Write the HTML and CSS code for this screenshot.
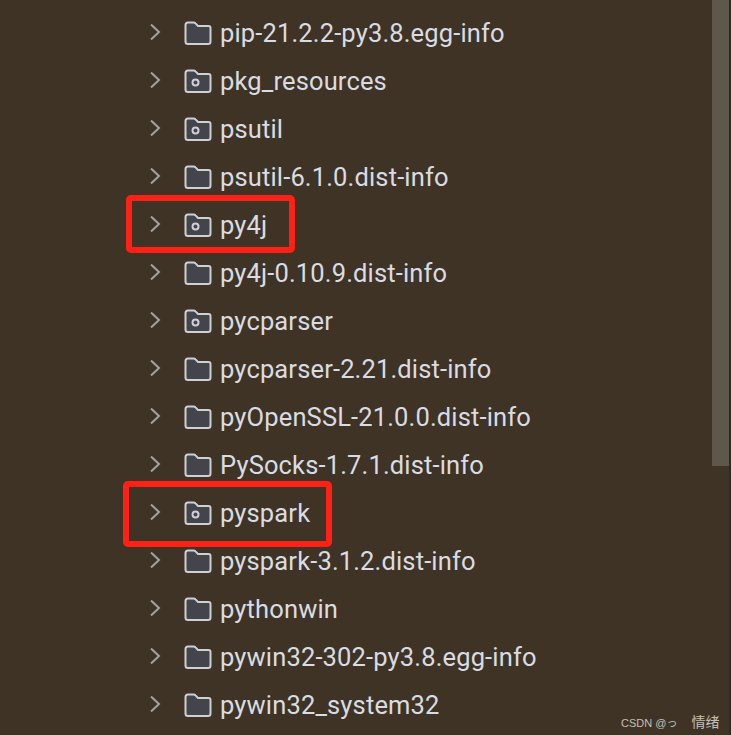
FILE: index.html
```html
<!DOCTYPE html>
<html lang="en">
<head>
  <meta charset="UTF-8" />
  <title>Project tree</title>
  <link rel="stylesheet" href="styles.css">
</head>
<body>
  <svg class="defs" width="0" height="0">
    <symbol id="chevron" viewBox="0 0 12 18">
      <path d="M2 1.5 L10 9 L2 16.5" fill="none" stroke="#a3a3a0" stroke-width="2"/>
    </symbol>
    <symbol id="folder" viewBox="0 0 28 24">
      <path d="M1.5 4 Q1.5 1.5 4 1.5 H9.5 Q10.7 1.5 11.5 2.4 L14 5 H24.5 Q26.5 5 26.5 7 V20.5 Q26.5 23 24 23 H4 Q1.5 23 1.5 20.5 Z" fill="#43454a" stroke="#ced0d6" stroke-width="2"/>
    </symbol>
    <symbol id="package" viewBox="0 0 28 24">
      <path d="M1.5 4 Q1.5 1.5 4 1.5 H9.5 Q10.7 1.5 11.5 2.4 L14 5 H24.5 Q26.5 5 26.5 7 V20.5 Q26.5 23 24 23 H4 Q1.5 23 1.5 20.5 Z" fill="#43454a" stroke="#ced0d6" stroke-width="2"/>
      <circle cx="11.5" cy="13.5" r="3" fill="none" stroke="#ced0d6" stroke-width="2"/>
    </symbol>
  </svg>

  <ul class="tree">
    <li class="row"><svg class="chevron"><use href="#chevron"/></svg><svg class="icon"><use href="#folder"/></svg><span class="name">pip-21.2.2-py3.8.egg-info</span></li>
    <li class="row"><svg class="chevron"><use href="#chevron"/></svg><svg class="icon"><use href="#package"/></svg><span class="name">pkg_resources</span></li>
    <li class="row"><svg class="chevron"><use href="#chevron"/></svg><svg class="icon"><use href="#package"/></svg><span class="name">psutil</span></li>
    <li class="row"><svg class="chevron"><use href="#chevron"/></svg><svg class="icon"><use href="#folder"/></svg><span class="name">psutil-6.1.0.dist-info</span></li>
    <li class="row"><svg class="chevron"><use href="#chevron"/></svg><svg class="icon"><use href="#package"/></svg><span class="name">py4j</span></li>
    <li class="row"><svg class="chevron"><use href="#chevron"/></svg><svg class="icon"><use href="#folder"/></svg><span class="name">py4j-0.10.9.dist-info</span></li>
    <li class="row"><svg class="chevron"><use href="#chevron"/></svg><svg class="icon"><use href="#package"/></svg><span class="name">pycparser</span></li>
    <li class="row"><svg class="chevron"><use href="#chevron"/></svg><svg class="icon"><use href="#folder"/></svg><span class="name">pycparser-2.21.dist-info</span></li>
    <li class="row"><svg class="chevron"><use href="#chevron"/></svg><svg class="icon"><use href="#folder"/></svg><span class="name">pyOpenSSL-21.0.0.dist-info</span></li>
    <li class="row"><svg class="chevron"><use href="#chevron"/></svg><svg class="icon"><use href="#folder"/></svg><span class="name">PySocks-1.7.1.dist-info</span></li>
    <li class="row"><svg class="chevron"><use href="#chevron"/></svg><svg class="icon"><use href="#package"/></svg><span class="name">pyspark</span></li>
    <li class="row"><svg class="chevron"><use href="#chevron"/></svg><svg class="icon"><use href="#folder"/></svg><span class="name">pyspark-3.1.2.dist-info</span></li>
    <li class="row"><svg class="chevron"><use href="#chevron"/></svg><svg class="icon"><use href="#folder"/></svg><span class="name">pythonwin</span></li>
    <li class="row"><svg class="chevron"><use href="#chevron"/></svg><svg class="icon"><use href="#folder"/></svg><span class="name">pywin32-302-py3.8.egg-info</span></li>
    <li class="row"><svg class="chevron"><use href="#chevron"/></svg><svg class="icon"><use href="#folder"/></svg><span class="name">pywin32_system32</span></li>
  </ul>

  <div class="scrollbar"></div>
  <div class="mark mark-py4j"></div>
  <div class="mark mark-pyspark"></div>
  <div class="watermark">CSDN @っ<span class="watermark-name">情绪</span></div>
</body>
</html>
```

FILE: styles.css
```css
* { box-sizing: border-box; }
html, body {
  height: 100%;
}
body {
  margin: 0;
  overflow: hidden;
  position: relative;
  background: #3f3326;
  font-family: Roboto, "Open Sans", sans-serif;
}
.defs { position: absolute; }

/* File tree */
.tree {
  list-style: none;
  margin: 0;
  padding: 8px 0 0 149px;
}
.row {
  display: flex;
  align-items: center;
  height: 48px;
  color: #d8dce3;
  font-size: 25.5px;
  letter-spacing: 0.15px;
}
.name {
  margin-top: 2px;
}
.chevron {
  width: 12px;
  height: 18px;
  margin-right: 23px;
}
.icon {
  width: 28px;
  height: 24px;
  margin-right: 8px;
  flex: none;
  position: relative;
  top: 1px;
}

/* Scrollbar */
.scrollbar {
  position: absolute;
  top: 0;
  left: 712px;
  width: 17px;
  height: 466px;
  background: #5f574c;
}
body::after {
  content: "";
  position: absolute;
  top: 0;
  right: 0;
  width: 2px;
  height: 100%;
  background: #2e2a24;
}

/* Red annotation boxes */
.mark {
  position: absolute;
  border: 6px solid #ff2016;
  border-radius: 5px;
}
.mark-py4j {
  left: 126px;
  top: 195px;
  width: 169px;
  height: 58px;
}
.mark-pyspark {
  left: 123px;
  top: 481px;
  width: 209px;
  height: 66px;
}

/* Watermark */
.watermark {
  position: absolute;
  left: 621px;
  top: 713px;
  color: #c4c0b8;
  font-family: "Liberation Sans", "Noto Sans CJK SC", sans-serif;
  font-size: 11px;
  line-height: 16px;
  white-space: nowrap;
}
.watermark-name {
  margin-left: 14px;
  font-family: "Noto Sans CJK SC", sans-serif;
  font-size: 14px;
}
```
